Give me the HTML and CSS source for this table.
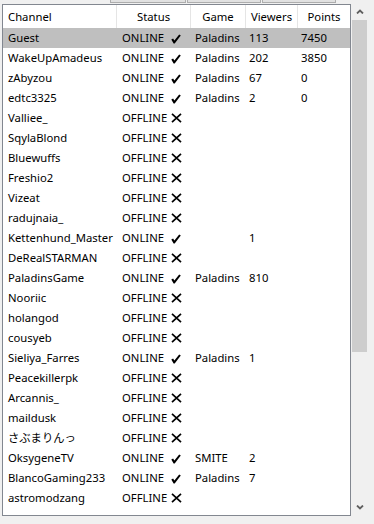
FILE: index.html
```html
<!DOCTYPE html>
<html>
<head>
<meta charset="utf-8">
<link rel="stylesheet" href="styles.css">
</head>
<body>
<div class="topstrip">
  <div class="btnstub b1"></div>
  <div class="btnstub b2"></div>
  <div class="btnstub b3"></div>
</div>
<div class="main">
  <div class="list">
    <div class="row head">
      <div class="c c1 h-left">Channel</div>
      <div class="c c2 h-center">Status</div>
      <div class="c c3 h-center">Game</div>
      <div class="c c4 h-center">Viewers</div>
      <div class="c c5 h-center">Points</div>
    </div>
    <div id="rows"></div>
  </div>
  <div class="scrollbar">
    <div class="sb-btn"><svg width="8" height="5" viewBox="0 0 8 5"><path d="M1 4.5 L4 1.5 L7 4.5" fill="none" stroke="#606060" stroke-width="1.8"/></svg></div>
    <div class="sb-thumb"></div>
    <div class="sb-track"></div>
    <div class="sb-btn"><svg width="8" height="5" viewBox="0 0 8 5"><path d="M1 0.5 L4 3.5 L7 0.5" fill="none" stroke="#606060" stroke-width="1.8"/></svg></div>
  </div>
</div>
<script src="app.js"></script>
</body>
</html>
```

FILE: app.js
```js
const data = [
  ["Guest", 1, "Paladins", "113", "7450", true],
  ["WakeUpAmadeus", 1, "Paladins", "202", "3850"],
  ["zAbyzou", 1, "Paladins", "67", "0"],
  ["edtc3325", 1, "Paladins", "2", "0"],
  ["Valliee_", 0, "", "", ""],
  ["SqylaBlond", 0, "", "", ""],
  ["Bluewuffs", 0, "", "", ""],
  ["Freshio2", 0, "", "", ""],
  ["Vizeat", 0, "", "", ""],
  ["radujnaia_", 0, "", "", ""],
  ["Kettenhund_Master", 1, "", "1", ""],
  ["DeRealSTARMAN", 0, "", "", ""],
  ["PaladinsGame", 1, "Paladins", "810", ""],
  ["Nooriic", 0, "", "", ""],
  ["holangod", 0, "", "", ""],
  ["cousyeb", 0, "", "", ""],
  ["Sieliya_Farres", 1, "Paladins", "1", ""],
  ["Peacekillerpk", 0, "", "", ""],
  ["Arcannis_", 0, "", "", ""],
  ["maildusk", 0, "", "", ""],
  ["さぶまりんっ", 0, "", "", ""],
  ["OksygeneTV", 1, "SMITE", "2", ""],
  ["BlancoGaming233", 1, "Paladins", "7", ""],
  ["astromodzang", 0, "", "", ""]
];
const check = '<svg class="ico ck" width="10" height="10" viewBox="0 0 10 10"><path d="M0.3 5.6 L2.1 4.6 L3.4 6.6 L8.2 0.4 L9.8 1.4 L3.7 9.6 L2.6 9.6 Z" fill="#000"/></svg>';
const cross = '<svg class="ico cx" width="11" height="10" viewBox="0 0 11 10"><path d="M1 0.8 L10 9.2 M10 0.8 L1 9.2" stroke="#000" stroke-width="1.7" fill="none"/></svg>';
const rows = document.getElementById("rows");
let html = "";
for (const d of data) {
  html += '<div class="row' + (d[5] ? ' sel' : '') + '">' +
    '<div class="c c1">' + d[0] + '</div>' +
    '<div class="c c2"><span class="st">' + (d[1] ? 'ONLINE' : 'OFFLINE') + '</span>' + (d[1] ? check : cross) + '</div>' +
    '<div class="c c3">' + d[2] + '</div>' +
    '<div class="c c4">' + d[3] + '</div>' +
    '<div class="c c5">' + d[4] + '</div>' +
    '</div>';
}
rows.innerHTML = html;
```

FILE: styles.css
```css
html, body {
  margin: 0;
  padding: 0;
  background: #f0f0f0;
}
body {
  width: 374px;
  height: 524px;
  overflow: hidden;
  font-family: "Noto Sans", "Noto Sans CJK JP", sans-serif;
  font-size: 11.3px;
  color: #000;
}
.topstrip {
  height: 3px;
  display: flex;
  padding-left: 110px;
  gap: 1px;
}
.btnstub {
  height: 2px;
  background: #e1e1e1;
  border: 1px solid #adadad;
  border-top: none;
}
.b1 { width: 74px; }
.b2 { width: 72px; }
.b3 { width: 72px; }
.main {
  display: flex;
  align-items: flex-start;
}
.list {
  margin-left: 2px;
  margin-top: 1px;
  width: 347px;
  height: 510px;
  background: #fff;
  border: 1px solid #828790;
}
.row {
  display: grid;
  grid-template-columns: 114px 74px 55px 52px 52px;
  height: 20px;
  align-items: center;
  white-space: nowrap;
}
.row.head {
  height: 23px;
}
.row.sel {
  background: #bfbfbf;
}
.c {
  overflow: hidden;
  line-height: 20px;
}
.c1 { padding-left: 5px; }
.c2 { padding-left: 5px; display: flex; align-items: center; }
.c3 { padding-left: 4px; }
.c4 { padding-left: 3px; }
.c5 { padding-left: 3px; }
.head .c {
  line-height: 23px;
  height: 23px;
  border-right: 1px solid #e5e5e5;
  box-sizing: border-box;
}
.head .c5 { border-right: none; }
.h-center { text-align: center; padding-left: 0; display: block; }
.st {
  display: inline-block;
  width: 49px;
}
.ico { display: block; }
.ck { margin-top: 1px; }
.scrollbar {
  width: 17px;
  height: 513px;
  display: flex;
  flex-direction: column;
  background: #f0f0f0;
}
.sb-btn {
  height: 17px;
  display: flex;
  align-items: center;
  justify-content: center;
}
.sb-thumb {
  height: 332px;
  margin: 0 1px;
  background: #cdcdcd;
}
.sb-track {
  flex: 1;
}
```
